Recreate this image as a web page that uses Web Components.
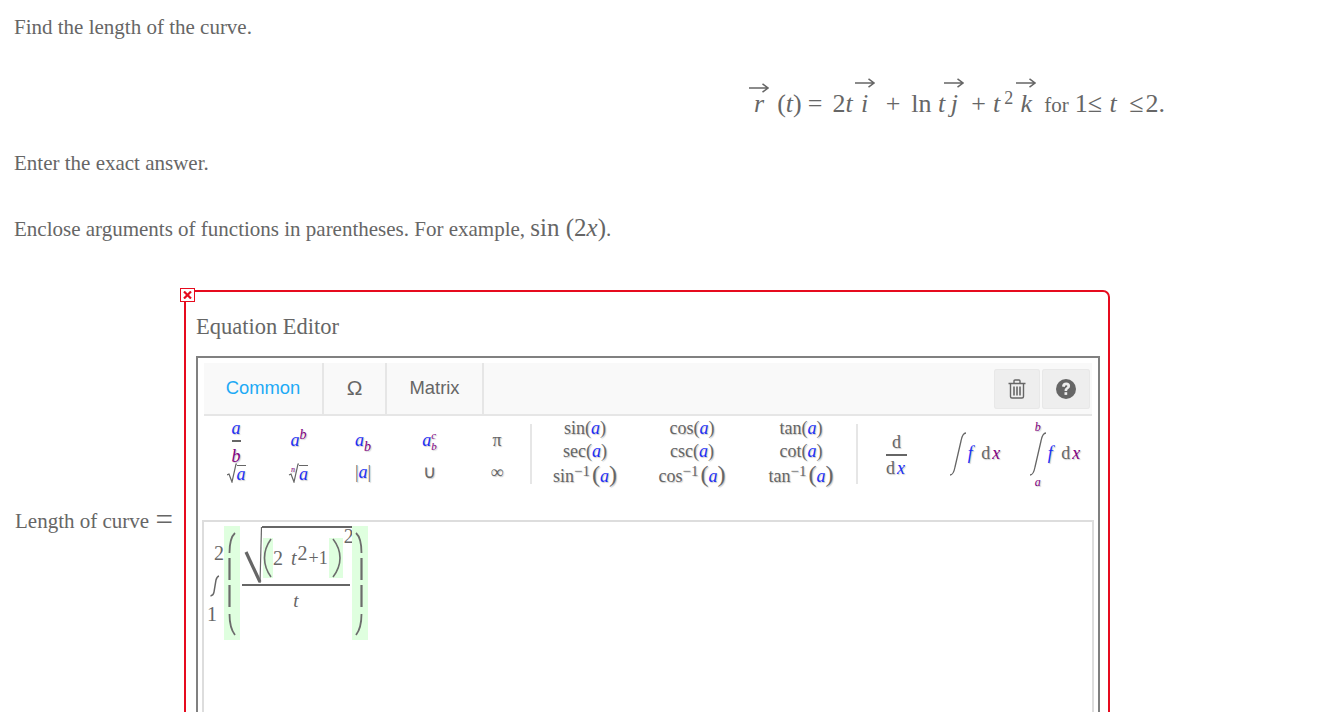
<!DOCTYPE html>
<html>
<head>
<meta charset="utf-8">
<title>Length of curve</title>
<style>
  html { height: 712px; overflow: hidden; }
  body { margin: 0; height: 712px; overflow: hidden; background: #fff; color: #666; font: 21px "Liberation Serif", serif; }
  i { font-style: italic; }
</style>
</head>
<body>
<question-page></question-page>

<script>
const arrow = `<svg viewBox="0 0 20 10" width="20" height="10" fill="none" stroke="#666" stroke-width="1.500"><path d="M0 5h19M13.500 .8 19 5l-5.500 4.200"/></svg>`

// letter with a vector arrow sitting over it
customElements.define('vec-letter', class extends HTMLElement {
  constructor () {
    super()
    this.attachShadow({ mode: 'open' })
    this.shadowRoot.innerHTML = `<style>
  :host { display: inline-block; position: relative; width: 20px; text-align: center; font-style: italic; white-space: normal; }
  svg { position: absolute; left: 0; top: -6px; }
  :host([low]) svg { top: -1px; }
</style>${arrow}<slot></slot>`
  }
})

customElements.define('curve-formula', class extends HTMLElement {
  constructor () {
    super()
    this.attachShadow({ mode: 'open' })
    this.shadowRoot.innerHTML = `<style>
  :host { display: flex; justify-content: flex-end; align-items: baseline; padding: 0 167px 0 0; height: 40px; font-size: 26px; line-height: 40px; }
  span { white-space: pre; }
  sup { font-size: 18px; line-height: 0; position: relative; top: -8px; vertical-align: baseline; margin-left: 4px; margin-right: 1px; }
  .for { font-size: 21px; margin-left: 8px; }
  i { font-style: italic; }
</style><vec-letter low>r</vec-letter><span style="margin-left:8px">(<i>t</i>)</span><span style="margin-left:6px">=</span><span style="margin-left:10px">2<i>t</i></span><vec-letter style="margin-left:2px">i</vec-letter><span style="margin-left:11px">+</span><span style="margin-left:11px">ln <i>t</i></span><vec-letter style="margin-left:-1px">j</vec-letter><span style="margin-left:7px">+</span><span style="margin-left:7px"><i>t</i><sup>2</sup></span><vec-letter style="margin-left:2px">k</vec-letter><span class="for">for</span><span style="margin-left:6px">1≤ <i style="margin-left:1px">t</i> <span style="margin:0 2px 0 6px">≤</span>2.</span>`
  }
})

customElements.define('tool-tab', class extends HTMLElement {
  constructor () {
    super()
    this.attachShadow({ mode: 'open' })
    this.shadowRoot.innerHTML = `
<style>
  :host { display: flex; align-items: center; justify-content: center; box-sizing: border-box; height: 51px; padding-bottom: 2px; border-right: 2px solid #e6e6e6; font: 18.400px "Liberation Sans", sans-serif; color: #666; }
  :host([active]) { color: #1eaaf5; }
</style>
<slot></slot>`
  }
})

customElements.define('tool-button', class extends HTMLElement {
  constructor () {
    super()
    this.attachShadow({ mode: 'open' })
    this.shadowRoot.innerHTML = `
<style>
  :host { display: flex; align-items: center; justify-content: center; height: 40px; background: #eee; border-radius: 3px; box-shadow: inset 0 0 0 1px #e8e8e8; }
</style>
<slot></slot>`
  }
})

customElements.define('tool-tabs', class extends HTMLElement {
  constructor () {
    super()
    this.attachShadow({ mode: 'open' })
    this.shadowRoot.innerHTML = `
<style>
  :host { display: flex; align-items: stretch; height: 51px; background: #f9f9f9; border-bottom: 2px solid #e6e6e6; }
  .common { width: 120px; }
  .omega { width: 63px; font-size: 21px; }
  .matrix { width: 97px; }
  .acts { margin-left: auto; display: flex; gap: 2px; align-items: center; padding-right: 2px; }
  .trash { width: 46px; }
  .help { width: 48px; }
</style>
<tool-tab class="common" active>Common</tool-tab>
<tool-tab class="omega">Ω</tool-tab>
<tool-tab class="matrix">Matrix</tool-tab>
<div class="acts">
  <tool-button class="trash">
    <svg width="18" height="20" viewBox="0 0 18 20" fill="none" stroke="#666" stroke-width="1.400"><path d="M.5 4.500h17M6 4.500V2q0-1 1-1h4q1 0 1 1v2.500M2.500 4.500v13q0 1.500 1.500 1.500h10q1.500 0 1.500-1.500v-13"/><path stroke-width="1.600" d="M6 7.500v9M9 7.500v9M12 7.500v9"/></svg>
  </tool-button>
  <tool-button class="help">
    <svg width="20" height="20" viewBox="0 0 20 20"><circle cx="10" cy="10" r="10" fill="#666"/><path d="M6 7.600Q6.300 3.600 10.200 3.600 14.100 3.700 14.100 7 14.100 8.800 12.200 10 11.100 10.700 11.100 12H8.500Q8.400 9.700 10 8.700 11.400 7.900 11.400 7.100 11.300 6.200 10.100 6.200 8.900 6.200 8.700 7.900Z" fill="#eee"/><rect x="8.500" y="13.200" width="2.700" height="2.700" fill="#eee"/></svg>
  </tool-button>
</div>`
  }
})

// stacked fraction, used by the toolbar symbols
customElements.define('math-frac', class extends HTMLElement {
  constructor () {
    super()
    this.attachShadow({ mode: 'open' })
    this.shadowRoot.innerHTML = `
<style>
  :host { display: inline-flex; flex-direction: column; align-items: center; line-height: 17px; }
  .bar { align-self: stretch; height: 2px; background: #666; margin: 3.500px 0 var(--under-bar, 3.500px); }
</style>
<slot name="top"></slot><div class="bar"></div><slot name="bottom"></slot>`
  }
})

customElements.define('symbol-grid', class extends HTMLElement {
  constructor () {
    super()
    const integral = `<svg width="20" height="44" viewBox="0 0 20 44" fill="none" stroke="#666" stroke-width="1.300"><path d="M18 1Q14.500 1 13 9L7 35Q5.500 43 2 43"/></svg>`
    const root = (w) => `<svg width="${w}" height="20" viewBox="0 0 ${w} 20" fill="none" stroke="#666" stroke-width="1.200"><path d="M${w - 10} 12l2-1 3 8 4-18h1"/></svg>`
    const inv = (f) => `<span>${f}<sup>−1</sup><span class="big">(</span><i class="a">a</i><span class="big">)</span></span>`
    this.attachShadow({ mode: 'open' })
    this.shadowRoot.innerHTML = `
<style>
  :host { display: grid; grid-template-columns: 64px 63px 64px 69px 66px 2px 106px 108px 110px 2px 77px 80px 80px; grid-template-rows: 43px 28px; height: 88px; box-sizing: border-box; text-shadow: 1px 1px 1px #ccc; font-size: 18px; color: #666; }
  .c { display: flex; align-items: center; justify-content: center; white-space: pre; }
  .r1 { padding-top: 6px; box-sizing: border-box; }
  .r2 { grid-row: 2; margin-top: -1px; }
  .sep { background: #e6e6e6; height: 60px; margin-top: 8px; grid-row: 1 / 3; }
  .trig { display: flex; flex-direction: column; align-items: center; line-height: 23px; height: 72px; padding-top: 1px; box-sizing: border-box; grid-row: 1 / 3; }
  .trig > span:last-child { margin-top: 2px; }
  .wide { display: flex; align-items: center; justify-content: center; grid-row: 1 / 3; margin-top: 4px; }
  .deriv { margin-top: 7px; }
  .ab { --under-bar: 5.500px; margin-top: 3px; }
  i { font-style: italic; }
  .a { color: #1a2ef5; }
  .b { color: #800080; }
  sup { font-size: 14px; line-height: 0; margin-right: 2px; }
  sub { font-size: 14px; line-height: 0; }
  .trig sup { font-size: 15px; vertical-align: 6px; }
  .big { font-size: 24px; line-height: 0; font-weight: 100; }
  .lim { display: flex; flex-direction: column; align-items: center; font-size: 12px; line-height: 14px; margin-top: 1px; }
  .lim svg { margin: -1.500px 0; }
  .dx { letter-spacing: 2px; }
  .stack { display: inline-flex; flex-direction: column; line-height: 11px; font-size: 11px; padding-top: 1px; }
  .radical { border-top: 1px solid #666; line-height: 16px; margin-top: 2px; }
</style>
<div class="c r1"><math-frac class="ab"><i class="a" slot="top">a</i><i class="b" slot="bottom">b</i></math-frac></div>
<div class="c r1"><span><i class="a">a</i><sup><i class="b">b</i></sup></span></div>
<div class="c r1"><span><i class="a">a</i><sub><i class="b">b</i></sub></span></div>
<div class="c r1"><i class="a">a</i><span class="stack"><i class="b">c</i><i class="b">b</i></span></div>
<div class="c r1">π</div>

<div class="sep" style="grid-column:6"></div>
<div class="trig" style="grid-column:7"><span>sin(<i class="a">a</i>)</span><span>sec(<i class="a">a</i>)</span>${inv('sin')}</div>
<div class="trig" style="grid-column:8"><span>cos(<i class="a">a</i>)</span><span>csc(<i class="a">a</i>)</span>${inv('cos')}</div>
<div class="trig" style="grid-column:9"><span>tan(<i class="a">a</i>)</span><span>cot(<i class="a">a</i>)</span>${inv('tan')}</div>
<div class="sep" style="grid-column:10"></div>
<div class="wide deriv" style="grid-column:11"><math-frac><span slot="top">d</span><span slot="bottom" class="dx">d<i class="a">x</i></span></math-frac></div>
<div class="wide" style="grid-column:12">${integral}<span class="dx"><i class="a">f</i> d<i class="b">x</i></span></div>
<div class="wide" style="grid-column:13"><div class="lim" style="margin-right:-12px"><i class="b">b</i>${integral}<i class="b">a</i></div><span class="dx" style="margin-left:12px"><i class="a">f</i> d<i class="b">x</i></span></div>

<div class="c r2" style="grid-column:1">${root(10)}<span class="radical"><i class="a">a</i></span></div>
<div class="c r2" style="grid-column:2"><span style="font-size:8px;line-height:8px;margin:-6px -8px 0 0" class="b"><i>n</i></span>${root(12)}<span class="radical"><i class="a">a</i></span></div>
<div class="c r2" style="grid-column:3">|<i class="a">a</i>|</div>
<div class="c r2" style="grid-column:4">∪</div>
<div class="c r2" style="grid-column:5">∞</div>`
  }
})

// the tall bracket pair around the integrand
customElements.define('tall-paren', class extends HTMLElement {
  constructor () {
    super()
    this.attachShadow({ mode: 'open' })
    const flip = this.hasAttribute('right') ? 'transform="matrix(-1 0 0 1 15 0)"' : ''
    this.shadowRoot.innerHTML = `
<style>
  :host { display: block; width: 16px; height: 114px; background: #dfffdf; }
  svg { display: block; }
</style>
<svg width="16" height="114" viewBox="0 0 16 114" fill="none" stroke="#6c6c6c" stroke-width="1.800"><g ${flip}><path d="M11 7Q5.500 12 5.500 27"/><path d="M5.500 32v22M5.500 59v22" stroke-width="2.200"/><path d="M5.500 88Q5.500 102 11 109"/></g></svg>`
  }
})

customElements.define('answer-math', class extends HTMLElement {
  constructor () {
    super()
    this.attachShadow({ mode: 'open' })
    this.shadowRoot.innerHTML = `
<style>
  :host { display: flex; align-items: flex-start; padding: 4px 0 0 0; color: #666; font-size: 20px; }
  i { font-style: italic; }
  .lims { width: 20px; height: 114px; display: flex; flex-direction: column; align-items: flex-end; box-sizing: border-box; line-height: 20px; padding-top: 17px; }
  .lims svg { display: block; margin: 12px 3px 7px 0; }
  .lims .low { align-self: flex-start; margin-left: 3px; }
  .frac { width: 108px; margin: 0 2px; display: flex; flex-direction: column; }
  .num { height: 58px; border-bottom: 2px solid #666; display: flex; }
  .root { display: block; width: 20px; height: 58px; flex: none; }
  .rad { flex: 1; border-top: 2px solid #666; display: flex; align-items: flex-start; padding-top: 10px; box-sizing: border-box; height: 58px; line-height: 40px; white-space: pre; }
  .grp { height: 40px; background: #dfffdf; flex: none; }
  .grp svg { display: block; }
  .den { text-align: center; line-height: 30px; font-size: 19px; }
  .sup { line-height: 20px; margin: -12px 0 0 1px; }
  .t2 { line-height: 20px; margin: 5px 0 0 1px; }
</style>
<div class="lims"><span>2</span><svg width="12" height="22" viewBox="0 0 12 22" fill="none" stroke="#666" stroke-width="1.500"><path d="M10 1Q8 1.500 7 5L5 17Q4.500 20.500 1.500 21"/></svg><span class="low">1</span></div>
<tall-paren></tall-paren>
<div class="frac">
  <div class="num">
    <svg class="root" viewBox="0 0 20 58" fill="none" stroke="#666"><path d="M4 26l14 30" stroke-width="3.200"/><path d="M18 57 19.500 1" stroke-width="1.200"/></svg>
    <div class="rad"><div class="grp" style="margin-left:1px;width:10px"><svg width="10" height="40" viewBox="0 0 10 40" fill="none" stroke="#6c6c6c" stroke-width="1.600"><path d="M8 1Q1.500 10 1.500 20T8 39"/></svg></div><span>2</span><i style="margin-left:8px">t</i><span class="t2">2</span><span style="margin-left:1px;font-size:18px">+1</span><div class="grp" style="margin-left:1px;width:14px"><svg width="14" height="40" viewBox="0 0 14 40" fill="none" stroke="#6c6c6c" stroke-width="1.600"><path d="M4 1Q11 10 11 20T4 39"/></svg></div><span class="sup">2</span></div>
  </div>
  <div class="den"><i>t</i></div>
</div>
<tall-paren right></tall-paren>`
  }
})

customElements.define('equation-editor', class extends HTMLElement {
  constructor () {
    super()
    this.attachShadow({ mode: 'open' })
    this.shadowRoot.innerHTML = `
<style>
  :host { display: block; position: relative; box-sizing: border-box; width: 926px; height: 440px; border: 2px solid #e60b1e; border-radius: 7px; padding: 0 8px 0 10px; }
  .close { position: absolute; left: -6px; top: -4px; width: 15px; height: 14px; box-sizing: border-box; background: #fff; border: 1px solid #e60b1e; display: flex; align-items: center; justify-content: center; }
  h2 { margin: 0; padding-top: 21px; height: 64px; box-sizing: border-box; font: 400 22.500px/28px "Liberation Serif", serif; color: #666; }
  .shell { border: 2px solid #808080; padding: 5px 6px 0; height: 360px; }
  .input { margin: 16px -2px 0; border: 2px solid #ddd; height: 300px; box-sizing: border-box; }
</style>
<div class="close"><svg width="9" height="8" viewBox="0 0 9 8" stroke="#e60b1e" stroke-width="2.200"><path d="M1 .5l7 7M8 .5l-7 7"/></svg></div>
<h2>Equation Editor</h2>
<div class="shell">
  <tool-tabs></tool-tabs>
  <symbol-grid></symbol-grid>
  <div class="input"><answer-math></answer-math></div>
</div>`
  }
})

customElements.define('question-page', class extends HTMLElement {
  constructor () {
    super()
    this.attachShadow({ mode: 'open' })
    this.shadowRoot.innerHTML = `
<style>
  :host { display: block; padding: 14px 0 0 14px; font: 21px/27px "Liberation Serif", serif; color: #666; }
  p { margin: 0; }
  .big { font-size: 25px; }
  i { font-style: italic; }
  .answer { display: flex; align-items: flex-start; margin-top: 47px; }
  .label { width: 170px; flex: none; padding-top: 218px; padding-left: 1px; box-sizing: border-box; white-space: pre; }
  .eq { font-size: 31px; line-height: 0; vertical-align: -2px; margin-left: 1px; }
  curve-formula { margin-top: 43px; margin-left: -14px; }
</style>
<p>Find the length of the curve.</p>
<curve-formula></curve-formula>
<p style="margin-top:26px">Enter the exact answer.</p>
<p style="margin-top:37px">Enclose arguments of functions in parentheses. For example, <span class="big">sin (2<i>x</i>)</span>.</p>
<div class="answer">
  <div class="label">Length of curve <span class="eq">=</span></div>
  <equation-editor></equation-editor>
</div>`
  }
})
</script>
</body>
</html>
